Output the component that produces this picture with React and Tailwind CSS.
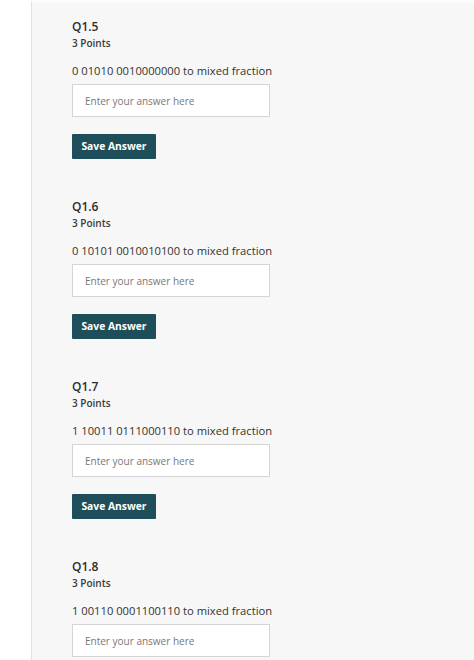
import { useState } from "react";

const questions = [
  { id: "Q1.5", points: 3, prompt: "0 01010 0010000000 to mixed fraction" },
  { id: "Q1.6", points: 3, prompt: "0 10101 0010010100 to mixed fraction" },
  { id: "Q1.7", points: 3, prompt: "1 10011 0111000110 to mixed fraction" },
  { id: "Q1.8", points: 3, prompt: "1 00110 0001100110 to mixed fraction" },
];

function Question({ q }) {
  const [val, setVal] = useState("");
  return (
    <div className="flex flex-col items-start">
      <div className="text-[12px] leading-[18px] font-semibold text-[#2d2d2d]">{q.id}</div>
      <div className="text-[10px] leading-[14px] font-semibold text-[#3a3a3a]">{q.points} Points</div>
      <div className="mt-[12px] text-[11.2px] leading-[18px] text-[#333]">{q.prompt}</div>
      <input
        value={val}
        onChange={(e) => setVal(e.target.value)}
        placeholder="Enter your answer here"
        className="mt-[4px] w-[198px] h-[33px] bg-white border border-[#d4d4d4] px-[12px] text-[10px] text-[#333] placeholder:text-[#777] outline-none"
      />
      <button className="mt-[17px] w-[84px] h-[25px] bg-[#1d4e5a] text-white text-[10.3px] font-bold rounded-[1px]">
        Save Answer
      </button>
    </div>
  );
}

export default function App() {
  return (
    <div className="flex h-[660px] overflow-hidden bg-white" style={{ fontFamily: '"Open Sans", sans-serif' }}>
      <div className="w-[31px] shrink-0 bg-white" />
      <div className="flex-1 bg-[#f7f7f7] border-l border-[#e2e2e2] border-t-[3px] border-t-[#fcfcfc]">
        <div className="pl-[40px] pt-[15px] flex flex-col gap-[39px]">
          {questions.map((q) => (
            <Question key={q.id} q={q} />
          ))}
        </div>
      </div>
    </div>
  );
}
